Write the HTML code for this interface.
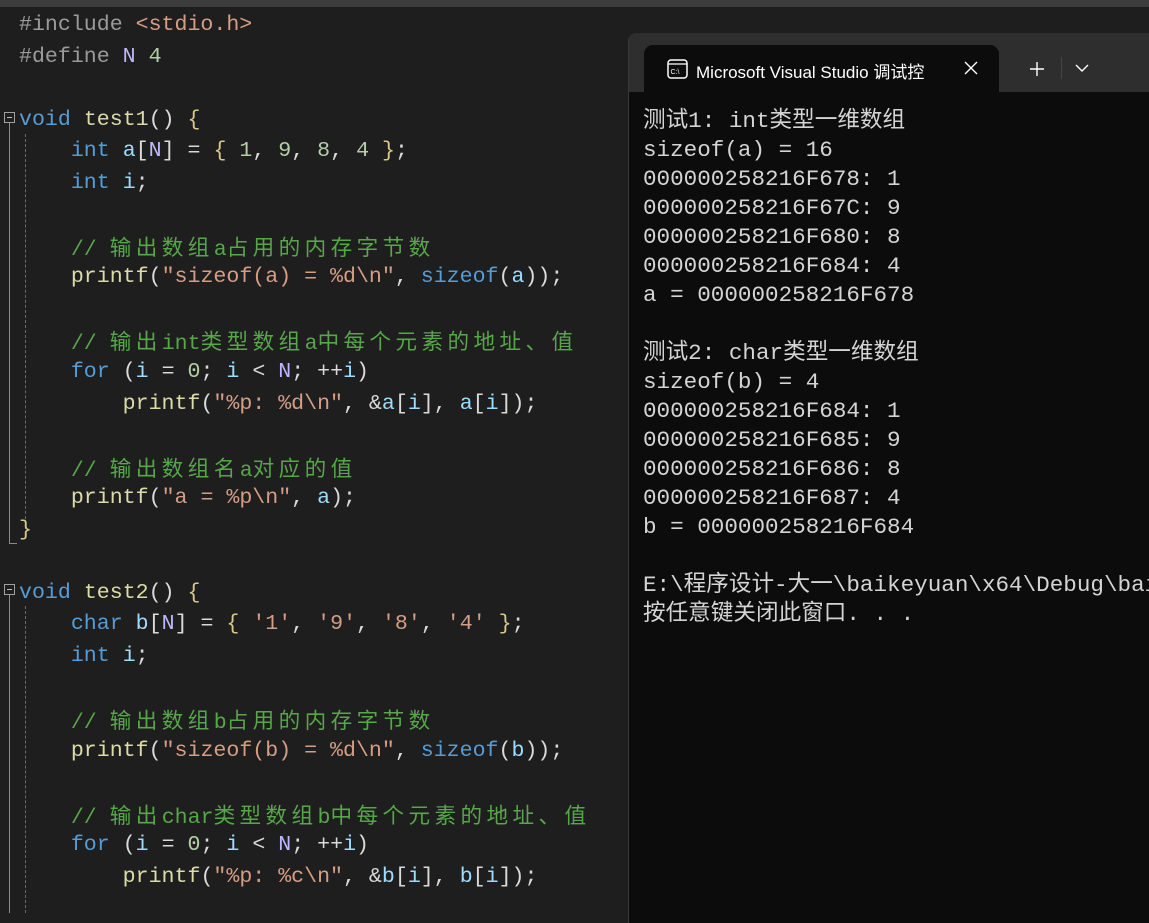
<!DOCTYPE html>
<html><head><meta charset="utf-8"><style>
body{margin:0;width:1149px;height:913px;background:#1e1e1e;overflow:hidden;position:relative;font-family:"Liberation Mono","Noto Sans CJK SC",monospace}
#top{position:absolute;left:0;top:0;width:1149px;height:7px;background:#3d3d3d}
#code{position:absolute;left:19px;top:10px;font-size:21.6px;line-height:31.55px;color:#dadada}
#code div{height:31.55px;white-space:pre}
.pp{color:#9b9b9b}.kw{color:#569cd6}.fn{color:#dcdcaa}.mc{color:#beb7ff}.nm{color:#b5cea8}.st{color:#d69d85}.cm{color:#57a64a}.vr{color:#9cdcfe}.br{color:#d8c98a}.pa{color:#d8c98a}
.c{font-family:"Noto Sans CJK SC",sans-serif;letter-spacing:4.4px}
.fold{position:absolute;left:4px;width:11px;height:11px;border:1px solid #a0a0a0;box-sizing:border-box}
.fold:after{content:"";position:absolute;left:2px;top:4px;width:5px;height:1px;background:#c0c0c0}
.vl{position:absolute;left:9px;width:1px;background:#8a8a8a}
.hl{position:absolute;left:9px;width:8px;height:1px;background:#8a8a8a}
.dl{position:absolute;left:25px;width:0;border-left:1px dashed #6a6a6a}
#term{position:absolute;left:628px;top:33px;width:530px;height:890px;background:#0c0c0c;border-radius:8px 0 0 0;overflow:hidden;border-left:1px solid #3a3a3a}
#bar{position:absolute;left:0;top:0;width:100%;height:59px;background:#2e2e2e}
#tab{position:absolute;left:15px;top:12px;width:355px;height:50px;background:#0c0c0c;border-radius:9px 9px 0 0;color:#fff;font-family:"Liberation Sans","Noto Sans CJK SC",sans-serif;font-size:17px}
#out{position:absolute;left:14px;top:74px;font-size:22.6px;line-height:29px;color:#d4d4d4;white-space:pre}
</style></head><body>
<div id="top"></div>
<div class="fold" style="top:112px"></div><div class="vl" style="top:123px;height:421px"></div><div class="hl" style="top:543px"></div>
<div class="fold" style="top:584px"></div><div class="vl" style="top:595px;height:318px"></div>
<div class="dl" style="top:134px;height:395px"></div>
<div class="dl" style="top:606px;height:307px"></div>
<div id="code"><div><span class="pp">#include </span><span class="st">&lt;stdio.h&gt;</span></div><div><span class="pp">#define </span><span class="mc">N</span> <span class="nm">4</span></div><div> </div><div><span class="kw">void</span> <span class="fn">test1</span>() <span class="br">{</span></div><div>    <span class="kw">int</span> <span class="vr">a</span>[<span class="mc">N</span>] = <span class="pa">{</span> <span class="nm">1</span>, <span class="nm">9</span>, <span class="nm">8</span>, <span class="nm">4</span> <span class="pa">}</span>;</div><div>    <span class="kw">int</span> <span class="vr">i</span>;</div><div> </div><div><span class="cm">    // <span class="c">输出数组</span>a<span class="c">占用的内存字节数</span></span></div><div>    <span class="fn">printf</span>(<span class="st">"sizeof(a) = %d\n"</span>, <span class="kw">sizeof</span>(<span class="vr">a</span>));</div><div> </div><div><span class="cm">    // <span class="c">输出</span>int<span class="c">类型数组</span>a<span class="c">中每个元素的地址、值</span></span></div><div>    <span class="kw">for</span> (<span class="vr">i</span> = <span class="nm">0</span>; <span class="vr">i</span> &lt; <span class="mc">N</span>; ++<span class="vr">i</span>)</div><div>        <span class="fn">printf</span>(<span class="st">"%p: %d\n"</span>, &amp;<span class="vr">a</span>[<span class="vr">i</span>], <span class="vr">a</span>[<span class="vr">i</span>]);</div><div> </div><div><span class="cm">    // <span class="c">输出数组名</span>a<span class="c">对应的值</span></span></div><div>    <span class="fn">printf</span>(<span class="st">"a = %p\n"</span>, <span class="vr">a</span>);</div><div><span class="br">}</span></div><div> </div><div><span class="kw">void</span> <span class="fn">test2</span>() <span class="br">{</span></div><div>    <span class="kw">char</span> <span class="vr">b</span>[<span class="mc">N</span>] = <span class="pa">{</span> <span class="st">'1'</span>, <span class="st">'9'</span>, <span class="st">'8'</span>, <span class="st">'4'</span> <span class="pa">}</span>;</div><div>    <span class="kw">int</span> <span class="vr">i</span>;</div><div> </div><div><span class="cm">    // <span class="c">输出数组</span>b<span class="c">占用的内存字节数</span></span></div><div>    <span class="fn">printf</span>(<span class="st">"sizeof(b) = %d\n"</span>, <span class="kw">sizeof</span>(<span class="vr">b</span>));</div><div> </div><div><span class="cm">    // <span class="c">输出</span>char<span class="c">类型数组</span>b<span class="c">中每个元素的地址、值</span></span></div><div>    <span class="kw">for</span> (<span class="vr">i</span> = <span class="nm">0</span>; <span class="vr">i</span> &lt; <span class="mc">N</span>; ++<span class="vr">i</span>)</div><div>        <span class="fn">printf</span>(<span class="st">"%p: %c\n"</span>, &amp;<span class="vr">b</span>[<span class="vr">i</span>], <span class="vr">b</span>[<span class="vr">i</span>]);</div></div>
<div id="term">
<div id="bar"></div>
<div id="tab">
<svg style="position:absolute;left:23px;top:14px" width="22" height="20" viewBox="0 0 22 20"><rect x="1" y="1" width="19" height="18" rx="3" fill="none" stroke="#fff" stroke-width="1.5"/><line x1="1" y1="5" x2="20" y2="5" stroke="#fff" stroke-width="1.3"/><text x="3.5" y="15" font-size="7" fill="#fff" font-family="Liberation Sans">C:\</text></svg>
<span style="position:absolute;left:52px;top:13px;white-space:nowrap;width:246px;overflow:hidden">Microsoft Visual Studio 调试控</span>
<svg style="position:absolute;left:320px;top:16px" width="14" height="14"><path d="M1 1L13 13M13 1L1 13" stroke="#fff" stroke-width="1.4"/></svg>
</div>
<svg style="position:absolute;left:400px;top:28px" width="16" height="16"><path d="M8 1V15M1 8H15" stroke="#fff" stroke-width="1.4"/></svg>
<div style="position:absolute;left:432px;top:24px;width:1px;height:22px;background:#454545"></div>
<svg style="position:absolute;left:446px;top:31px" width="14" height="9"><path d="M1 1L7 7L13 1" stroke="#fff" stroke-width="1.4" fill="none"/></svg>
<div id="out">测试1: int类型一维数组
sizeof(a) = 16
000000258216F678: 1
000000258216F67C: 9
000000258216F680: 8
000000258216F684: 4
a = 000000258216F678

测试2: char类型一维数组
sizeof(b) = 4
000000258216F684: 1
000000258216F685: 9
000000258216F686: 8
000000258216F687: 4
b = 000000258216F684

E:\程序设计-大一\baikeyuan\x64\Debug\baikeyuan.exe
按任意键关闭此窗口. . .</div>
</div>
</body></html>
